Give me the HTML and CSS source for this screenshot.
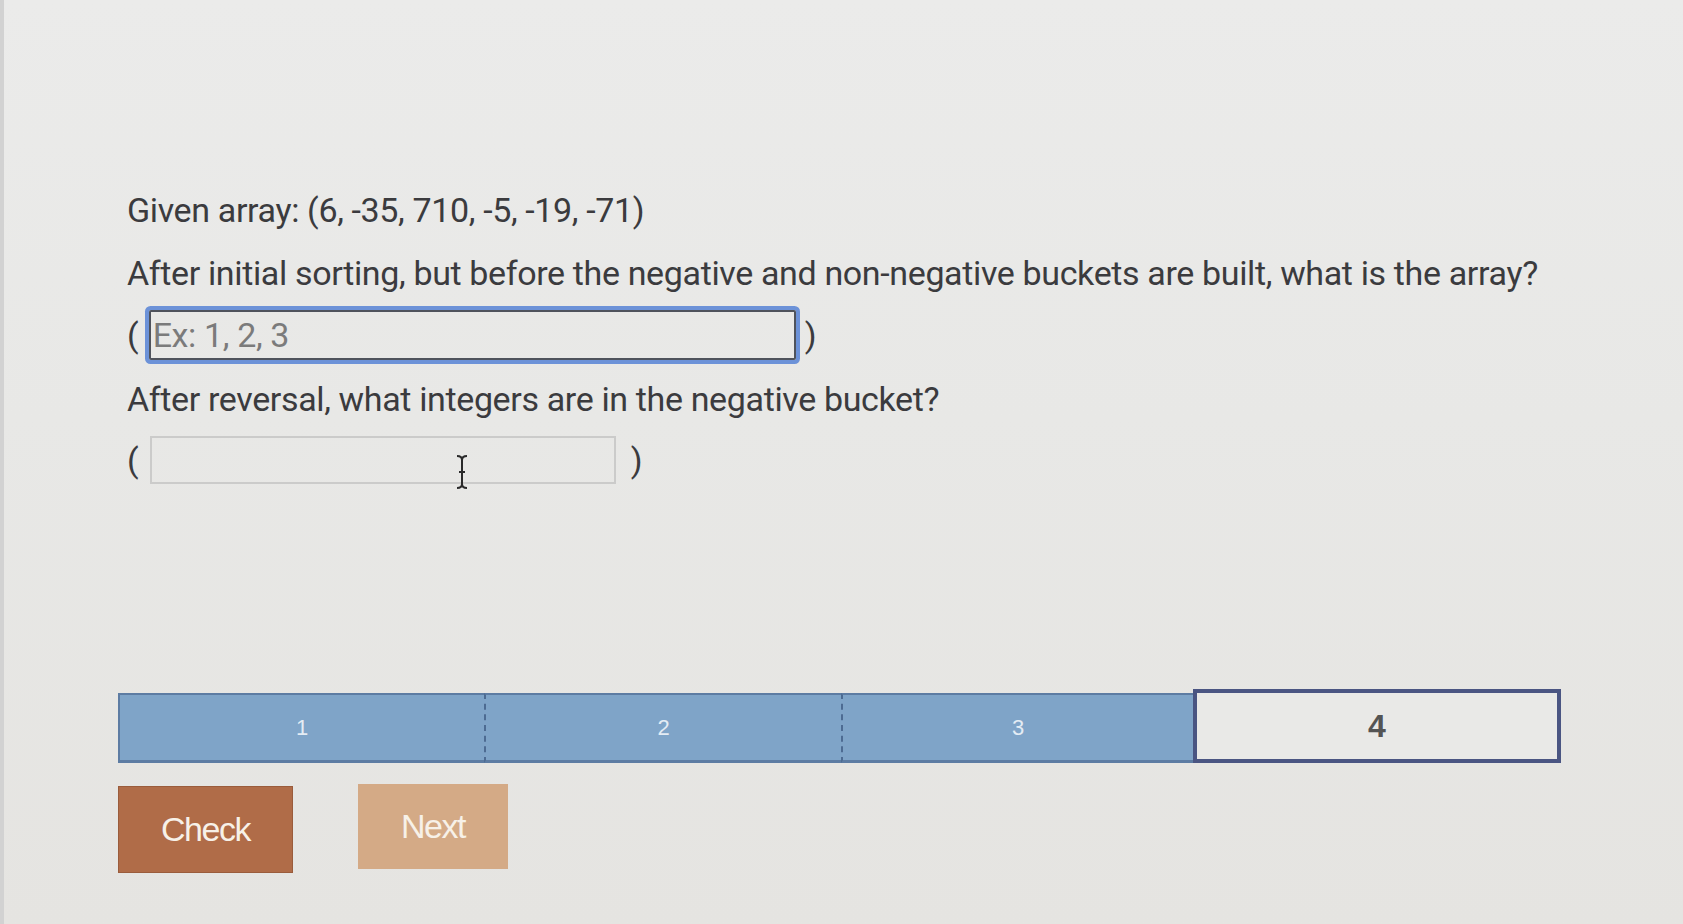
FILE: index.html
```html
<!DOCTYPE html>
<html>
<head>
<meta charset="utf-8">
<link rel="stylesheet" href="styles.css">
</head>
<body>
<div class="page">
  <div class="question">
    <p class="line first">Given array: (6, -35, 710, -5, -19, -71)</p>
    <p class="line second">After initial sorting, but before the negative and non-negative buckets are built, what is the array?</p>
    <div class="answer answer-one">
      <span class="paren">(</span>
      <input class="field field-focus" type="text" placeholder="Ex: 1, 2, 3">
      <span class="paren">)</span>
    </div>
    <p class="line third">After reversal, what integers are in the negative bucket?</p>
    <div class="answer answer-two">
      <span class="paren">(</span>
      <input class="field field-plain" type="text">
      <span class="paren paren-right">)</span>
      <svg class="ibeam" width="14" height="36" viewBox="0 0 14 36">
        <path d="M2 2 Q7 2 7 6 Q7 2 12 2 M7 6 V30 M2 34 Q7 34 7 30 Q7 34 12 34 M4 18 H10" fill="none" stroke="#2a2a2a" stroke-width="2"/>
      </svg>
    </div>
  </div>
  <div class="progress">
    <div class="seg seg-done seg-first"><span>1</span></div>
    <div class="seg seg-done seg-dash"><span>2</span></div>
    <div class="seg seg-done seg-dash seg-last"><span>3</span></div>
    <div class="seg seg-current"><span>4</span></div>
  </div>
  <div class="buttons">
    <button class="btn btn-check">Check</button>
    <button class="btn btn-next">Next</button>
  </div>
</div>
</body>
</html>
```
FILE: styles.css
```css
html, body {
  margin: 0;
  padding: 0;
}
body {
  width: 1683px;
  height: 924px;
  overflow: hidden;
  background: linear-gradient(180deg, #ebebea 0%, #e8e8e6 45%, #e5e4e1 100%);
  font-family: Roboto, "Liberation Sans", sans-serif;
  color: #3b3b3e;
}
.page {
  padding: 190px 0 0 114px;
  box-sizing: border-box;
  height: 924px;
  border-left: 4px solid #d2d2d2;
}
.question {
  padding-left: 9px;
}
.line {
  margin: 0;
  font-size: 34px;
  line-height: 40px;
  white-space: nowrap;
  letter-spacing: -0.36px;
}
.second {
  margin-top: 23px;
}
.third {
  margin-top: 16px;
}
.answer {
  display: flex;
  align-items: center;
  font-size: 34px;
  position: relative;
}
.answer-one {
  margin-top: 14px;
  height: 56px;
}
.answer-two {
  margin-top: 17px;
  height: 48px;
}
.paren {
  line-height: 40px;
  color: #3b3b3e;
}
.field {
  font-family: Roboto, "Liberation Sans", sans-serif;
  font-size: 34px;
  letter-spacing: -0.36px;
  height: 48px;
  box-sizing: border-box;
  background: transparent;
  outline: none;
  color: #3b3b3e;
}
.field::placeholder {
  color: #7b7b7b;
}
.field-focus {
  width: 647px;
  height: 50px;
  margin: 0 9px 0 10px;
  border: 2px solid #4f535c;
  box-shadow: 0 0 0 4px #6c92d8;
  border-radius: 2px;
  padding: 0 2px;
}
.field-plain {
  width: 466px;
  margin: 0 15px 0 11px;
  border: 2px solid #cbcbca;
  padding: 0 4px;
}
.ibeam {
  position: absolute;
  left: 328px;
  top: 18px;
}
.progress {
  margin-top: 209px;
  display: grid;
  grid-template-columns: 366px 357px 352px 368px;
  align-items: center;
  width: 1443px;
}
.seg {
  display: flex;
  align-items: center;
  justify-content: center;
  box-sizing: border-box;
  font-family: "Liberation Sans", Arial, sans-serif;
}
.seg-done {
  height: 70px;
  background: #7fa4c8;
  border-top: 2px solid #5d7ca3;
  border-bottom: 3px solid #5d7ca3;
  color: #e4ecf4;
  font-size: 22px;
}
.seg-first {
  border-left: 2px solid #5d7ca3;
}
.seg-dash {
  border-left: 2px dashed #4d6b92;
}
.seg-current {
  height: 74px;
  margin-top: -4px;
  border: 4px solid #4a5582;
  background: #e9e9e7;
  color: #545454;
  font-size: 32px;
  font-weight: bold;
}
.buttons {
  margin-top: 23px;
  display: flex;
  gap: 65px;
  align-items: flex-start;
}
.btn {
  border: none;
  font-family: "Liberation Sans", Arial, sans-serif;
  font-size: 34px;
  letter-spacing: -1.5px;
  color: #f7f1e8;
  padding: 0;
}
.btn-check {
  width: 175px;
  height: 87px;
  background: #b06c48;
  border: 1px solid #9a5c3c;
}
.btn-next {
  width: 150px;
  height: 85px;
  margin-top: -2px;
  background: #d4aa86;
}
```
